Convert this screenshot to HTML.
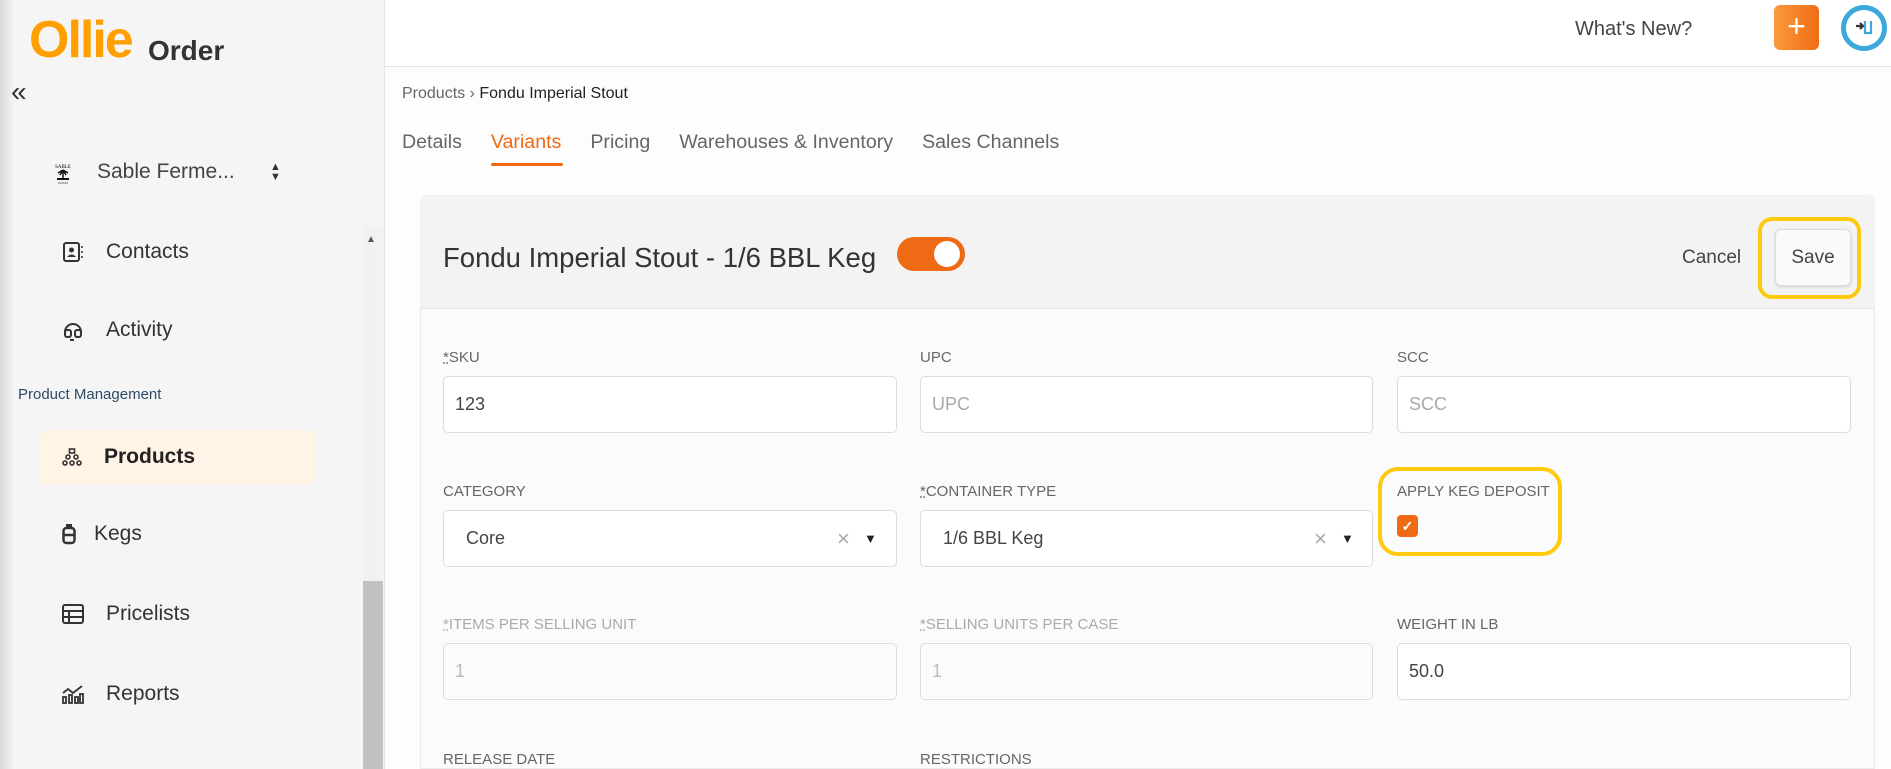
<!DOCTYPE html>
<html><head><meta charset="utf-8"><style>
*{box-sizing:border-box;margin:0;padding:0}
body{width:1891px;height:769px;overflow:hidden;background:#fdfdfd;font-family:"Liberation Sans",sans-serif;color:#333;position:relative}
.abs{position:absolute}
#side{left:0;top:0;width:385px;height:769px;background:#f5f5f5;border-right:1px solid #e6e6e6}
#side .shade{left:0;top:0;width:14px;height:769px;background:linear-gradient(90deg,#d8d8d8,#f5f5f5)}
.nav{position:absolute;left:62px;font-size:21px;color:#333;display:flex;align-items:center}
.nav svg{margin-right:22px}
.lbl{position:absolute;font-size:15px;color:#666;text-transform:uppercase}
.inp{position:absolute;height:57px;border:1px solid #ddd;border-radius:5px;background:#fff;font-size:18px;color:#444;padding-left:11px;line-height:55px}
.dis{background:#fbfbfb;color:#bbb}
.ph{color:#aaa}
</style></head><body>
<div id="side" class="abs">
 <div class="shade abs"></div>
 <div class="abs" style="left:29px;top:10px;font-size:52px;font-weight:bold;color:#ffa000;letter-spacing:-2px">Ollie</div>
 <div class="abs" style="left:148px;top:35px;font-size:28px;font-weight:bold;color:#333">Order</div>
 <div class="abs" style="left:11px;top:76px;font-size:28px;color:#333">«</div>
 <svg class="abs" style="left:52px;top:163px" width="22" height="22" viewBox="0 0 22 22"><text x="11" y="5" font-size="5" text-anchor="middle" font-family="Liberation Serif">SABLE</text><path d="M11 7l-5 3M11 7l5 3M11 7l-3 5M11 7l3 5" stroke="#111" stroke-width="1.5"/><path d="M11 7v9" stroke="#111" stroke-width="1.5"/><path d="M5 16h12" stroke="#111" stroke-width="2"/><path d="M6 20h10" stroke="#555" stroke-width="0.8"/></svg>
 <div class="abs" style="left:97px;top:160px;font-size:21px;color:#444">Sable Ferme...</div>
 <div class="abs" style="left:270px;top:162px;font-size:11px;line-height:10px;color:#333">▲<br>▼</div>
 <div class="abs" style="left:363px;top:226px;width:20px;height:543px;background:#f1f1f1"></div>
 <div class="abs" style="left:366px;top:234px;font-size:10px;color:#555">▲</div>
 <div class="abs" style="left:363px;top:581px;width:20px;height:188px;background:#c1c1c1"></div>
 <div class="nav" style="top:240px"><svg width="22" height="22" viewBox="0 0 22 22"><rect x="2" y="2" width="15" height="18" rx="2" fill="none" stroke="#333" stroke-width="2"/><circle cx="9.5" cy="9" r="2.5" fill="#333"/><path d="M5 16q4.5-5 9 0z" fill="#333"/><path d="M20 5v2M20 10v2M20 15v2" stroke="#333" stroke-width="1.5"/></svg>Contacts</div>
 <div class="nav" style="top:318px"><svg width="22" height="22" viewBox="0 0 22 22"><path d="M3 13a8 8 0 0 1 16 0" fill="none" stroke="#333" stroke-width="2"/><rect x="3" y="11" width="6" height="7" rx="2" fill="none" stroke="#333" stroke-width="2"/><rect x="13" y="11" width="6" height="7" rx="2" fill="none" stroke="#333" stroke-width="2"/><path d="M8 21h4" stroke="#333" stroke-width="2"/></svg>Activity</div>
 <div class="abs" style="left:18px;top:386px;font-size:15px;color:#2c4a66">Product Management</div>
 <div class="abs" style="left:40px;top:430px;width:275px;height:55px;background:#fff4e6;border-radius:8px"></div>
 <div class="nav" style="top:445px;font-weight:bold;color:#222"><svg width="20" height="20" viewBox="0 0 20 20" fill="none" stroke="#333" stroke-width="1.6"><rect x="7.5" y="2" width="5" height="4"/><circle cx="6" cy="10" r="2"/><circle cx="14" cy="10" r="2"/><circle cx="3" cy="16" r="2"/><circle cx="10" cy="16" r="2"/><circle cx="17" cy="16" r="2"/></svg>Products</div>
 <div class="nav" style="top:522px"><svg width="14" height="22" viewBox="0 0 14 22" style="margin-right:18px"><rect x="4" y="1" width="6" height="4" fill="#333"/><rect x="1.5" y="5" width="11" height="15" rx="3" fill="none" stroke="#333" stroke-width="2.5"/><path d="M2 12h10" stroke="#333" stroke-width="2.5"/></svg>Kegs</div>
 <div class="nav" style="top:602px"><svg width="22" height="20" viewBox="0 0 22 20" fill="none" stroke="#333" stroke-width="2"><rect x="1" y="1" width="20" height="18" rx="2"/><path d="M1 7h20M1 13h20M7 7v12"/></svg>Pricelists</div>
 <div class="nav" style="top:682px"><svg width="22" height="20" viewBox="0 0 22 20" fill="none" stroke="#333" stroke-width="1.8"><path d="M1 9l5-4 5 4 9-7"/><rect x="1" y="13" width="3" height="6"/><rect x="7" y="11" width="3" height="8"/><rect x="13" y="13" width="3" height="6"/><rect x="18" y="10" width="3" height="9"/></svg>Reports</div>
</div>
<div class="abs" style="left:385px;top:0;width:1506px;height:67px;background:#fff;border-bottom:1px solid #e4e4e4"></div>
<div class="abs" style="left:1575px;top:18px;font-size:20px;color:#444">What's New?</div>
<div class="abs" style="left:1774px;top:5px;width:45px;height:45px;border-radius:6px;background:linear-gradient(90deg,#fb9a3c,#ef6c14);color:#fff;font-size:32px;text-align:center;line-height:43px">+</div>
<svg class="abs" style="left:1841px;top:5px" width="46" height="46" viewBox="0 0 46 46"><circle cx="23" cy="23" r="20.5" fill="#fff" stroke="#3ea8dc" stroke-width="5"/><path d="M23 11l10 6v12l-10 6-10-6V17z" fill="#fff"/><path d="M15 21h7M19 18l3 3-3 3" stroke="#333" stroke-width="2.2" fill="none"/><path d="M24 16v12h6V16" stroke="#3ea8dc" stroke-width="2.2" fill="none"/></svg>
<div class="abs" style="left:402px;top:85px;font-size:16px;color:#666">Products <span style="color:#666">›</span> <span style="color:#222">Fondu Imperial Stout</span></div>
<div class="abs" style="left:402px;top:131px;font-size:19.6px;color:#666;white-space:nowrap">Details<span style="color:#ee6a14;margin-left:29px">Variants</span><span style="margin-left:29px">Pricing</span><span style="margin-left:29px">Warehouses &amp; Inventory</span><span style="margin-left:29px">Sales Channels</span></div>
<div class="abs" style="left:491px;top:163px;width:72px;height:3px;background:#ee6a14;border-radius:2px"></div>
<div class="abs" style="left:420px;top:195px;width:1455px;height:574px;background:#fbfbfb;border:1px solid #ececec;border-radius:6px 6px 0 0"></div>
<div class="abs" style="left:420px;top:195px;width:1455px;height:114px;background:#f3f3f3;border-bottom:1px solid #e6e6e6;border-radius:6px 6px 0 0"></div>
<div class="abs" style="left:443px;top:242px;font-size:27.5px;color:#333">Fondu Imperial Stout - 1/6 BBL Keg</div>
<div class="abs" style="left:897px;top:237px;width:68px;height:34px;border-radius:17px;background:#ee6a14"><div class="abs" style="left:37px;top:4px;width:26px;height:26px;border-radius:50%;background:#fff"></div></div>
<div class="abs" style="left:1682px;top:247px;font-size:19px;color:#444">Cancel</div>
<div class="abs" style="left:1758px;top:217px;width:103px;height:82px;border:4px solid #ffc90e;border-radius:14px"></div>
<div class="abs" style="left:1775px;top:229px;width:76px;height:57px;background:#fafafa;border:1px solid #ddd;border-radius:6px;box-shadow:0 1px 3px rgba(0,0,0,.15);font-size:19px;color:#444;text-align:center;line-height:55px">Save</div>

<div class="lbl" style="left:443px;top:349px"><u style="text-decoration-style:dotted">*</u>SKU</div>
<div class="lbl" style="left:920px;top:349px">UPC</div>
<div class="lbl" style="left:1397px;top:349px">SCC</div>
<div class="inp" style="left:443px;top:376px;width:454px">123</div>
<div class="inp ph" style="left:920px;top:376px;width:453px">UPC</div>
<div class="inp ph" style="left:1397px;top:376px;width:454px">SCC</div>

<div class="lbl" style="left:443px;top:483px">CATEGORY</div>
<div class="lbl" style="left:920px;top:483px"><u style="text-decoration-style:dotted">*</u>CONTAINER TYPE</div>
<div class="inp" style="left:443px;top:510px;width:454px;padding-left:22px">Core<span class="abs" style="left:393px;top:0;color:#aaa;font-size:22px">×</span><span class="abs" style="left:420px;top:0;font-size:13px;color:#222">▼</span></div>
<div class="inp" style="left:920px;top:510px;width:453px;padding-left:22px">1/6 BBL Keg<span class="abs" style="left:393px;top:0;color:#aaa;font-size:22px">×</span><span class="abs" style="left:420px;top:0;font-size:13px;color:#222">▼</span></div>
<div class="abs" style="left:1378px;top:467px;width:184px;height:89px;border:4px solid #ffc90e;border-radius:20px"></div>
<div class="lbl" style="left:1397px;top:483px">APPLY KEG DEPOSIT</div>
<div class="abs" style="left:1397px;top:515px;width:21px;height:22px;border-radius:4px;background:#ee6a14;color:#fff;font-size:14px;text-align:center;line-height:22px;font-weight:bold">✓</div>

<div class="lbl" style="left:443px;top:616px;color:#aaa"><u style="text-decoration-style:dotted">*</u>ITEMS PER SELLING UNIT</div>
<div class="lbl" style="left:920px;top:616px;color:#aaa"><u style="text-decoration-style:dotted">*</u>SELLING UNITS PER CASE</div>
<div class="lbl" style="left:1397px;top:616px">WEIGHT IN LB</div>
<div class="inp dis" style="left:443px;top:643px;width:454px">1</div>
<div class="inp dis" style="left:920px;top:643px;width:453px">1</div>
<div class="inp" style="left:1397px;top:643px;width:454px">50.0</div>
<div class="lbl" style="left:443px;top:751px">RELEASE DATE</div>
<div class="lbl" style="left:920px;top:751px">RESTRICTIONS</div>
</body></html>
